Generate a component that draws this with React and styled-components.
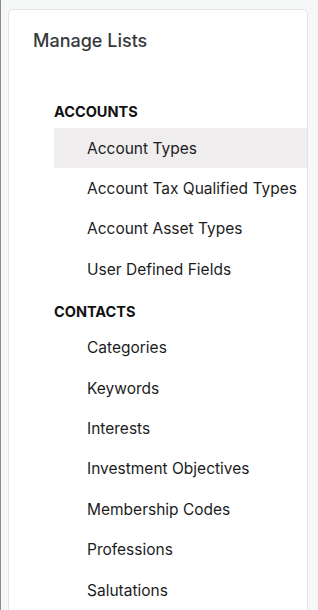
import React from 'react';
import styled, { createGlobalStyle } from 'styled-components';

const GlobalStyle = createGlobalStyle`
  html, body {
    margin: 0;
    padding: 0;
    background: #f6f7f7;
    font-family: Inter, "Noto Sans", sans-serif;
    overflow: hidden;
  }
`;

const Page = styled.div`
  min-height: 610px;
  border-left: 1px solid #8c8c8c;
  padding: 9px 10px 0 7px;
  box-sizing: border-box;
`;

const Card = styled.div`
  background: #ffffff;
  border: 1px solid #e3e3e3;
  border-radius: 5px;
  min-height: 640px;
  overflow: hidden;
`;

const Title = styled.h2`
  margin: 0;
  padding: 19px 24px 0;
  font-size: 18px;
  line-height: 24px;
  font-weight: 500;
  color: #363a3d;
`;

const Lists = styled.div`
  padding: 37px 0 0 45px;
`;

const Heading = styled.div`
  margin: 12px 0 6px;
  font-size: 14.5px;
  line-height: 20px;
  font-weight: 700;
  color: #111;
`;

const Item = styled.div`
  height: 40.4px;
  display: flex;
  align-items: center;
  padding-left: 33px;
  font-size: 15.5px;
  color: #1c1c1c;
  background: ${p => (p.$active ? '#efeded' : 'transparent')};
  white-space: nowrap;
`;

const groups = [
  {
    title: 'ACCOUNTS',
    items: ['Account Types', 'Account Tax Qualified Types', 'Account Asset Types', 'User Defined Fields'],
  },
  {
    title: 'CONTACTS',
    items: [
      'Categories',
      'Keywords',
      'Interests',
      'Investment Objectives',
      'Membership Codes',
      'Professions',
      'Salutations',
    ],
  },
];

export default function App() {
  return (
    <>
      <GlobalStyle />
      <Page>
        <Card>
          <Title>Manage Lists</Title>
          <Lists>
            {groups.map(g => (
              <div key={g.title}>
                <Heading>{g.title}</Heading>
                {g.items.map(i => (
                  <Item key={i} $active={i === 'Account Types'}>{i}</Item>
                ))}
              </div>
            ))}
          </Lists>
        </Card>
      </Page>
    </>
  );
}
